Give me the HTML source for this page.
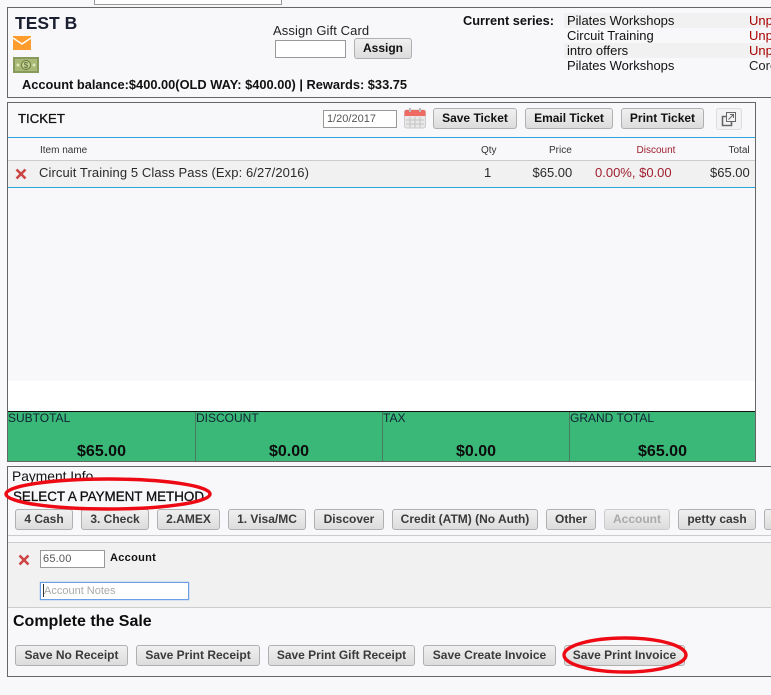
<!DOCTYPE html>
<html><head><meta charset="utf-8"><style>
html,body{margin:0;padding:0;width:771px;height:695px;overflow:hidden;background:#f8f8fa;font-family:"Liberation Sans",Arial,sans-serif;color:#111}
div,span,a{position:absolute;white-space:nowrap;box-sizing:border-box}
.btn{height:21px;border:1px solid #b0b0b0;border-radius:3px;background:linear-gradient(#f0f0f0,#dcdcdc);font-size:12px;font-weight:bold;text-align:center;line-height:19px;color:#3a3a3a}
.dk{color:#111}
.t{font-size:13px;line-height:15px}
.hd{font-size:10px;top:145px;line-height:12px;color:#333}
.r{font-size:13px;top:166px;line-height:14px;color:#2a2a2a}
.lab{font-size:12px;top:411px;line-height:14px;color:#123}
.val{font-size:16px;font-weight:bold;top:443px;line-height:18px;color:#0c0c0c;text-align:center}
.input{background:#fff;border:1px solid #999}
</style></head><body>
<div class="input" style="left:94px;top:-10px;width:188px;height:15px"></div>
<div style="left:7px;top:7px;width:780px;height:91px;border:1px solid #666"></div>
<div style="left:15px;top:13px;font-size:17.5px;font-weight:bold;line-height:20px;color:#1a2030">TEST B</div>
<svg style="position:absolute;left:13px;top:36px" width="18" height="14"><rect width="18" height="14" fill="#ff9c2e"/><path d="M0 2 L9 8 L18 2" fill="none" stroke="#fff" stroke-width="1.5"/></svg>
<svg style="position:absolute;left:13px;top:57px" width="26" height="16"><rect width="26" height="16" fill="#87995c"/><rect x="2" y="2" width="22" height="12" fill="#a9ba78"/><circle cx="13" cy="8" r="4.5" fill="#c5d395" stroke="#65783c"/><text x="13" y="11" font-size="8" text-anchor="middle" fill="#4e6030" font-family="Liberation Sans">$</text><circle cx="5" cy="8" r="1.5" fill="#dfe8b8"/><circle cx="21" cy="8" r="1.5" fill="#dfe8b8"/></svg>
<div style="left:22px;top:77px;font-size:12.83px;font-weight:bold;line-height:15px">Account balance:$400.00(OLD WAY: $400.00) | Rewards: $33.75</div>
<div style="left:273px;top:23px;font-size:13px;line-height:15px;letter-spacing:.1px;color:#222">Assign Gift Card</div>
<div class="input" style="left:275px;top:40px;width:71px;height:18px"></div>
<div class="btn dk" style="left:354px;top:38px;width:58px">Assign</div>
<div style="left:463px;top:13px;font-size:12.8px;font-weight:bold;line-height:15px">Current series:</div>
<div style="left:564px;top:13px;width:207px;height:15px;background:#f1f1f2"></div>
<div style="left:564px;top:43px;width:207px;height:15px;background:#f1f1f2"></div>
<div class="t" style="left:567px;top:13px">Pilates Workshops</div>
<div class="t" style="left:567px;top:28px">Circuit Training</div>
<div class="t" style="left:567px;top:43px">intro offers</div>
<div class="t" style="left:567px;top:58px">Pilates Workshops</div>
<div class="t" style="left:749px;top:13px;color:#a00">Unpaid</div>
<div class="t" style="left:749px;top:28px;color:#a00">Unpaid</div>
<div class="t" style="left:749px;top:43px;color:#a00">Unpaid</div>
<div class="t" style="left:749px;top:58px;color:#222">Core</div>

<div style="left:7px;top:102px;width:749px;height:360px;border:1px solid #666;border-bottom:0"></div>
<div style="left:18px;top:111px;font-size:13.2px;line-height:16px;color:#111;-webkit-text-stroke:.3px #111">TICKET</div>
<div class="input" style="left:323px;top:110px;width:74px;height:18px;font-size:11px;line-height:16px;padding-left:3px;color:#555">1/20/2017</div>
<svg style="position:absolute;left:404px;top:108px" width="22" height="21"><rect x="0.5" y="2" width="21" height="18" rx="2" fill="#e8e8e8" stroke="#ccc"/><path d="M0.5 8V4a2 2 0 0 1 2-2h17a2 2 0 0 1 2 2v4z" fill="#ee6a62"/><path d="M2 12h18M2 16h18M6 9v11M11 9v11M16 9v11" stroke="#c4c4c4"/><rect x="5" y="0" width="2" height="4" fill="#bbb"/><rect x="15" y="0" width="2" height="4" fill="#bbb"/></svg>
<div class="btn dk" style="left:433px;top:108px;width:84px">Save Ticket</div>
<div class="btn dk" style="left:525px;top:108px;width:88px">Email Ticket</div>
<div class="btn dk" style="left:621px;top:108px;width:83px">Print Ticket</div>
<div style="left:716px;top:108px;width:26px;height:22px;border:1px solid #ddd;border-radius:3px;background:#f3f3f5"></div>
<svg style="position:absolute;left:721px;top:111px" width="16" height="16" fill="none" stroke="#666"><rect x="5.5" y="1.5" width="9" height="9"/><path d="M5.5 5.5H1.5V14.5H10.5V10.5" stroke-width="1.6"/><path d="M7.5 8.5L12 4M9 3.5h3.5V7"/></svg>
<div style="left:8px;top:137px;width:747px;height:1px;background:#2aa5dc"></div>
<div style="left:8px;top:160px;width:747px;height:1px;background:#ccc"></div>
<div style="left:8px;top:161px;width:747px;height:26px;background:#f1f1f1"></div>
<div style="left:8px;top:187px;width:747px;height:1px;background:#2aa5dc"></div>
<div style="left:8px;top:381px;width:747px;height:30px;background:#fff"></div>
<div class="hd" style="left:40px">Item name</div>
<div class="hd" style="left:481px">Qty</div>
<div class="hd" style="left:549px">Price</div>
<div class="hd" style="left:636.5px;color:#a02030">Discount</div>
<div class="hd" style="left:728.5px">Total</div>
<svg style="position:absolute;left:15px;top:168px" width="12" height="12"><path d="M1.5 1.5L10.5 10.5M10.5 1.5L1.5 10.5" stroke="#cc4444" stroke-width="2.6"/></svg>
<div class="r" style="left:39px;letter-spacing:.09px">Circuit Training 5 Class Pass (Exp: 6/27/2016)</div>
<div class="r" style="left:484px">1</div>
<div class="r" style="left:532.5px">$65.00</div>
<div class="r" style="left:595px;color:#a02030">0.00%, $0.00</div>
<div class="r" style="left:710px">$65.00</div>

<div style="left:8px;top:411px;width:748px;height:1px;background:#111"></div>
<div style="left:8px;top:412px;width:748px;height:50px;background:#3ab878;border-bottom:1px solid #666"></div>
<div style="left:7px;top:102px;width:1px;height:360px;background:#666"></div>
<div style="left:755px;top:102px;width:1px;height:360px;background:#666"></div>
<div style="left:195px;top:412px;width:1px;height:49px;background:#4a7a60"></div>
<div style="left:382px;top:412px;width:1px;height:49px;background:#4a7a60"></div>
<div style="left:569px;top:412px;width:1px;height:49px;background:#4a7a60"></div>
<div class="lab" style="left:8px">SUBTOTAL</div>
<div class="lab" style="left:196px">DISCOUNT</div>
<div class="lab" style="left:383px">TAX</div>
<div class="lab" style="left:570px">GRAND TOTAL</div>
<div class="val" style="left:8px;width:187px">$65.00</div>
<div class="val" style="left:196px;width:186px">$0.00</div>
<div class="val" style="left:383px;width:186px">$0.00</div>
<div class="val" style="left:570px;width:185px">$65.00</div>

<div style="left:7px;top:466px;width:780px;height:211px;border:1px solid #666"></div>
<div style="left:12px;top:469px;font-size:13.8px;line-height:16px;color:#111">Payment Info</div>
<div style="left:13px;top:489px;font-size:13.4px;line-height:16px;color:#111;-webkit-text-stroke:.3px #111">SELECT A PAYMENT METHOD</div>
<div class="btn" style="left:15px;top:509px;width:58px">4 Cash</div>
<div class="btn" style="left:81px;top:509px;width:68px">3. Check</div>
<div class="btn" style="left:157px;top:509px;width:63px">2.AMEX</div>
<div class="btn" style="left:228px;top:509px;width:78px">1. Visa/MC</div>
<div class="btn" style="left:314px;top:509px;width:70px">Discover</div>
<div class="btn" style="left:392px;top:509px;width:146px">Credit (ATM) (No Auth)</div>
<div class="btn" style="left:546px;top:509px;width:50px">Other</div>
<div class="btn" style="left:604px;top:509px;width:66px;color:#aaa;border-color:#ccc">Account</div>
<div class="btn" style="left:678px;top:509px;width:78px">petty cash</div>
<div class="btn" style="left:764px;top:509px;width:40px"></div>
<div style="left:8px;top:535px;width:763px;height:1px;background:#ccc"></div>
<div style="left:8px;top:542px;width:763px;height:66px;background:#f1f1f1;border-top:1px solid #ccc;border-bottom:1px solid #ccc"></div>
<svg style="position:absolute;left:18px;top:554px" width="12" height="12"><path d="M1.5 1.5L10.5 10.5M10.5 1.5L1.5 10.5" stroke="#cc4444" stroke-width="2.6"/></svg>
<div class="input" style="left:40px;top:550px;width:65px;height:18px;font-size:11px;line-height:17px;padding-left:2px;color:#555;letter-spacing:.2px">65.00</div>
<div style="left:110px;top:551px;font-size:11px;font-weight:bold;line-height:14px;letter-spacing:.3px">Account</div>
<div class="input" style="left:40px;top:582px;width:149px;height:18px;border-color:#6a9ee6;font-size:11px;line-height:17px;padding-left:3px;color:#aaa;box-shadow:0 0 1px #6a9ee6">Account Notes</div>
<div style="left:43px;top:584px;width:1px;height:13px;background:#333"></div>
<div style="left:13px;top:612px;font-size:16px;font-weight:bold;line-height:20px;color:#0c0c0c">Complete the Sale</div>
<div class="btn" style="left:15px;top:645px;width:113px">Save No Receipt</div>
<div class="btn" style="left:136px;top:645px;width:124px">Save Print Receipt</div>
<div class="btn" style="left:268px;top:645px;width:147px">Save Print Gift Receipt</div>
<div class="btn" style="left:423px;top:645px;width:133px">Save Create Invoice</div>
<div class="btn" style="left:564px;top:645px;width:121px">Save Print Invoice</div>
<svg style="position:absolute;left:0;top:0" width="771" height="695" fill="none" stroke="#ee0a14" stroke-width="3.4"><ellipse cx="108" cy="494" rx="102" ry="15"/><ellipse cx="625" cy="655" rx="61" ry="17"/></svg>
</body></html>
